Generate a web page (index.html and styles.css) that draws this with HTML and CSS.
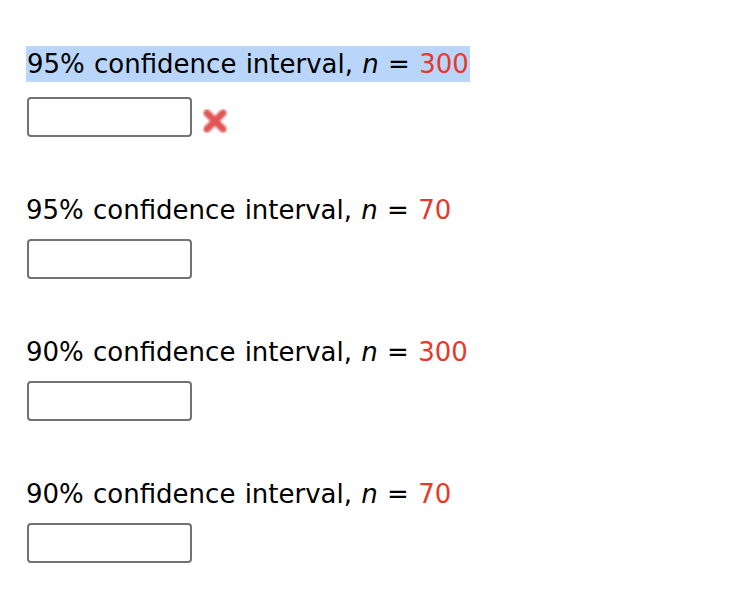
FILE: index.html
```
<!DOCTYPE html>
<html>
<head>
<meta charset="utf-8">
<link rel="stylesheet" href="styles.css">
</head>
<body>
<div class="page">
  <div class="item item-selected">
    <div class="label"><span class="sel">95% confidence interval, <i>n</i> = <span class="num">300</span></span></div>
    <div class="row">
      <input class="box" type="text">
      <svg class="wrong" width="30" height="30" viewBox="0 0 30 30" aria-hidden="true">
        <defs><filter id="b" x="-20%" y="-20%" width="140%" height="140%"><feGaussianBlur stdDeviation="0.8"/></filter></defs>
        <g filter="url(#b)" stroke="#e25555" stroke-width="7" stroke-linecap="round">
          <line x1="7" y1="7" x2="23" y2="23"/>
          <line x1="23" y1="7" x2="7" y2="23"/>
        </g>
      </svg>
    </div>
  </div>
  <div class="item">
    <div class="label">95% confidence interval, <i>n</i> = <span class="num">70</span></div>
    <div class="row"><input class="box" type="text"></div>
  </div>
  <div class="item">
    <div class="label">90% confidence interval, <i>n</i> = <span class="num">300</span></div>
    <div class="row"><input class="box" type="text"></div>
  </div>
  <div class="item">
    <div class="label">90% confidence interval, <i>n</i> = <span class="num">70</span></div>
    <div class="row"><input class="box" type="text"></div>
  </div>
</div>
</body>
</html>
```
FILE: styles.css
```
html, body {
  margin: 0;
  padding: 0;
  background: #ffffff;
}
.page {
  padding: 46px 0 0 26px;
  font-family: Verdana, "DejaVu Sans", sans-serif;
  font-size: 26px;
  word-spacing: 1px;
  color: #000;
  display: flex;
  flex-direction: column;
  gap: 55px;
}
.label {
  height: 36px;
  line-height: 36px;
  white-space: nowrap;
}
.sel {
  background: #b9d6fa;
  padding: 0 1px 0 1px;
  display: inline-block;
  line-height: 36px;
}
.num {
  color: #e8382a;
}
.row {
  margin-top: 11px;
  display: flex;
  align-items: center;
  gap: 8px;
  padding-left: 1px;
}
.item-selected .row {
  margin-top: 15px;
}
.box {
  width: 165px;
  height: 40px;
  box-sizing: border-box;
  border: 2px solid #727272;
  border-radius: 4px;
  margin: 0;
  padding: 0;
  background: #fff;
}
.wrong {
  margin-top: 7px;
}
```
